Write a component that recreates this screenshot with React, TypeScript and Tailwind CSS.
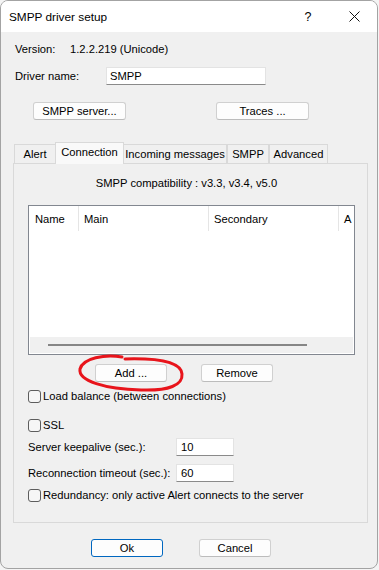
import React from 'react';

const FONT = { fontFamily: '"Liberation Sans", Arial, sans-serif' };

function Btn({ children, w, primary }: { children: React.ReactNode; w: string; primary?: boolean }) {
  return (
    <div
      className={`${w} h-[18px] flex items-center justify-center rounded-[3px] bg-[#fdfdfd] border ${
        primary ? 'border-[#0067c0]' : 'border-[#d0d0d0] border-b-[#bcbcbc]'
      }`}
    >
      {children}
    </div>
  );
}

function Check({ label }: { label: string }) {
  return (
    <div className="flex items-center h-[14px]">
      <div className="w-[13px] h-[13px] rounded-[3px] border border-[#5d5d5d] bg-[#f6f6f6]" />
      <span className="ml-[2px]">{label}</span>
    </div>
  );
}

function Field({ value, w }: { value: string; w: string }) {
  return (
    <div className={`${w} h-[18px] bg-white border border-[#e3e3e3] border-b-[#8a8a8a] flex items-center pl-[4px]`}>
      {value}
    </div>
  );
}

const TABS = ['Alert', 'Connection', 'Incoming messages', 'SMPP', 'Advanced'];
const TAB_W = ['w-[41px]', 'w-[69px]', 'w-[103px]', 'w-[42px]', 'w-[59px]'];

export default function App() {
  return (
    <div
      className="w-[379px] h-[570px] bg-[#f4f4f4] text-[11.2px] text-black leading-[14px] whitespace-nowrap"
      style={FONT}
    >
      <div className="w-[378px] h-[569px] rounded-[8px] border border-[#a3a3a3] bg-[#f0f0f0] overflow-hidden flex flex-col relative">
        {/* title bar */}
        <div className="h-[31px] bg-white flex items-center shrink-0">
          <span className="pl-[8px] text-[11.8px]">SMPP driver setup</span>
          <div className="ml-auto w-[46px] h-full flex items-center justify-center text-[12.5px]">?</div>
          <div className="w-[46px] h-full flex items-center justify-center">
            <svg width="11" height="11" viewBox="0 0 11 11">
              <path d="M0.5 0.5 L10.5 10.5 M10.5 0.5 L0.5 10.5" stroke="#111" strokeWidth="1" />
            </svg>
          </div>
        </div>

        <div className="flex items-center mt-[10px] pl-[14px]">
          <span className="w-[55px]">Version:</span>
          <span>1.2.2.219 (Unicode)</span>
        </div>

        <div className="flex items-center mt-[11px] pl-[14px]">
          <span className="w-[91px]">Driver name:</span>
          <div className="w-[160px] h-[18px] bg-white border border-[#e3e3e3] border-b-[#8a8a8a] flex items-center pl-[3px]">
            SMPP
          </div>
        </div>

        <div className="flex mt-[17px] pl-[32px]">
          <Btn w="w-[93px]">SMPP server...</Btn>
          <div className="ml-[90px]">
            <Btn w="w-[93px]">Traces ...</Btn>
          </div>
        </div>

        {/* tabs */}
        <div className="flex items-end mt-[21px] pl-[13px] h-[22px]">
          {TABS.map((t, i) =>
            i === 1 ? (
              <div
                key={t}
                className={`${TAB_W[i]} h-[22px] bg-[#f9f9f9] border border-b-0 border-[#d9d9d9] flex items-center justify-center relative z-10 -mb-px pb-[3px]`}
              >
                {t}
              </div>
            ) : (
              <div
                key={t}
                className={`${TAB_W[i]} h-[19px] border border-b-0 border-[#d9d9d9] flex items-center justify-center ${
                  i === 0 ? 'border-r-0' : i === 2 ? 'border-l-0' : ''
                }`}
              >
                {t}
              </div>
            )
          )}
        </div>

        {/* tab panel */}
        <div className="ml-[12px] w-[355px] h-[360px] border border-[#d9d9d9] bg-[#f0f0f0] flex flex-col">
          <div className="mt-[12px] text-center pr-[8px]">SMPP compatibility : v3.3, v3.4, v5.0</div>

          <div className="mt-[15px] ml-[14px] w-[327px] h-[150px] border border-[#828790] bg-white flex flex-col overflow-hidden">
            <div className="flex h-[25px]">
              <div className="w-[50px] pl-[6px] flex items-center border-r border-[#e5e5e5]">Name</div>
              <div className="w-[130px] pl-[5px] flex items-center border-r border-[#e5e5e5]">Main</div>
              <div className="w-[130px] pl-[5px] flex items-center border-r border-[#e5e5e5]">Secondary</div>
              <div className="pl-[5px] flex items-center">A</div>
            </div>
            <div className="flex-1" />
            <div className="h-[16px] mx-[1px] mb-[1px] bg-[#f0f0f0] flex items-center">
              <div className="ml-[18px] w-[259px] h-[2px] bg-[#868686]" />
            </div>
          </div>

          <div className="flex mt-[9px] ml-[81px]">
            <Btn w="w-[72px]">Add ...</Btn>
            <div className="ml-[34px]">
              <Btn w="w-[72px]">Remove</Btn>
            </div>
          </div>

          <div className="mt-[7px] ml-[14px]">
            <Check label="Load balance (between connections)" />
          </div>
          <div className="mt-[15px] ml-[14px]">
            <Check label="SSL" />
          </div>

          <div className="flex items-center mt-[6px] ml-[14px]">
            <span className="w-[148px]">Server keepalive (sec.):</span>
            <Field value="10" w="w-[58px]" />
          </div>
          <div className="flex items-center mt-[8px] ml-[14px]">
            <span className="w-[148px]">Reconnection timeout (sec.):</span>
            <Field value="60" w="w-[58px]" />
          </div>
          <div className="mt-[6px] ml-[14px]">
            <Check label="Redundancy: only active Alert connects to the server" />
          </div>
        </div>

        <div className="flex mt-[16px] ml-[90px]">
          <Btn w="w-[72px]" primary>
            Ok
          </Btn>
          <div className="ml-[36px]">
            <Btn w="w-[72px]">Cancel</Btn>
          </div>
        </div>

        {/* hand-drawn red mark */}
        <svg className="absolute left-0 top-0 pointer-events-none" width="379" height="570">
          <path
            d="M121 356 C104 353 82 357 79 368 C77 380 104 388 140 389 C168 390 182 384 181 373 C180 362 160 357 124 358"
            fill="none"
            stroke="#e8141b"
            strokeWidth="3"
            strokeLinecap="round"
          />
        </svg>
      </div>
    </div>
  );
}
